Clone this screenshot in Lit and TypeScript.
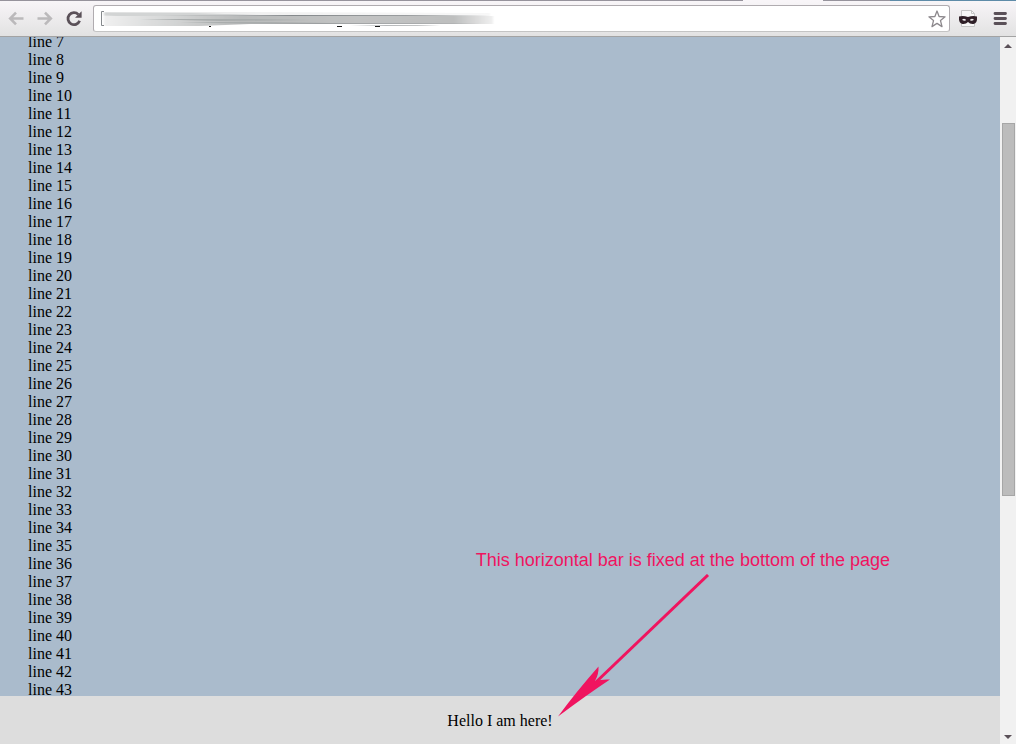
import { LitElement, html, css } from "lit";
import { customElement } from "lit/decorators.js";

@customElement("browser-toolbar")
class BrowserToolbar extends LitElement {
  static styles = css`
    :host {
      display: flex;
      align-items: center;
      box-sizing: border-box;
      height: 37px;
      padding: 0 2px;
      border-top: 1px solid #96939c;
      border-bottom: 1px solid #a3a3a3;
      background: linear-gradient(#f8f5f8, #e2e2e2);
      position: relative;
    }
    .tabs {
      position: absolute;
      top: -1px;
      left: 0;
      right: 0;
      height: 1px;
      display: flex;
      justify-content: flex-end;
    }
    .active { width: 80px; background: #f8f5f8; }
    .inactive { width: 67px; background: #96939c; }
    .frame { width: 126px; background: #5e8ba8; }
    .group { display: flex; flex: none; gap: 1px; }
    .tools { gap: 4px; }
    button {
      display: grid;
      place-items: center;
      flex: none;
      width: 28px;
      height: 28px;
      padding: 0;
      border: 0;
      background: none;
    }
    svg { display: block; }
    .address {
      flex: 1;
      display: flex;
      align-items: center;
      box-sizing: border-box;
      height: 27px;
      margin: 0 4px 0 5px;
      border: 1px solid #b0acb0;
      border-bottom-color: #c4c4c4;
      border-radius: 3px;
      background: #fff;
      position: relative;
    }
    .smudge {
      position: absolute;
      left: 6px;
      top: 5px;
      pointer-events: none;
    }
    input {
      flex: 1;
      min-width: 0;
      height: 24px;
      padding: 0 8px;
      border: 0;
      outline: 0;
      background: none;
      font: 14px "Liberation Sans", Arial, sans-serif;
    }
    .star { width: 25px; height: 24px; }
  `;

  render() {
    return html`
      <div class="tabs"><div class="active"></div><div class="inactive"></div><div class="frame"></div></div>
      <div class="group">
        <button aria-label="Back">
          <svg width="16" height="16" viewBox="0 0 16 16" fill="none" stroke="#bbb9bb" stroke-width="2.600">
            <path d="M15.500 7.500H2.500M8 1.700 2.200 7.500 8 13.300" />
          </svg>
        </button>
        <button aria-label="Forward">
          <svg width="16" height="16" viewBox="0 0 16 16" fill="none" stroke="#bbb9bb" stroke-width="2.600">
            <path d="M.5 7.500h13M8 1.700 13.800 7.500 8 13.300" />
          </svg>
        </button>
        <button aria-label="Reload">
          <svg width="16" height="16" viewBox="0 0 16 16">
            <path d="M12.400 3.600A6 6 0 1 0 13.600 9.800" fill="none" stroke="#5a5058" stroke-width="2.800" />
            <path d="M15.600.3V6.800H9z" fill="#5a5058" />
          </svg>
        </button>
      </div>
      <div class="address">
        <input type="text" aria-label="Address" />
        <svg class="smudge" width="395" height="18" viewBox="0 0 395 18">
          <defs>
            <linearGradient id="band">
              <stop offset="0" stop-color="#f0f0f0" />
              <stop offset=".12" stop-color="#dcdddd" />
              <stop offset=".35" stop-color="#b9bbbb" />
              <stop offset=".65" stop-color="#c2c3c3" />
              <stop offset=".9" stop-color="#bebfbf" />
              <stop offset="1" stop-color="#f0f0f0" />
            </linearGradient>
            <linearGradient id="streak">
              <stop offset="0" stop-color="#85898c" stop-opacity="0" />
              <stop offset=".4" stop-color="#85898c" />
              <stop offset=".75" stop-color="#9a9d9f" />
              <stop offset="1" stop-color="#85898c" stop-opacity="0" />
            </linearGradient>
            <linearGradient id="haze">
              <stop offset="0" stop-color="#dfe0e0" />
              <stop offset=".4" stop-color="#f1f1f1" />
              <stop offset="1" stop-color="#f8f8f8" />
            </linearGradient>
            <filter id="soft" x="-5%" y="-30%" width="110%" height="160%">
              <feGaussianBlur stdDeviation="1 .6" />
            </filter>
          </defs>
          <g filter="url(#soft)">
            <path d="M4 1h140l246 1v5H4z" fill="url(#haze)" />
            <path d="M4 2h120L60 4H4zM30 3h130l-60 2H4z" fill="#d2d4d4" />
            <path d="M4 5h389v8H150l-50 2H4z" fill="url(#band)" />
            <path d="M40 8h110l60 1-90 1zM80 11h90l60 1H120z" fill="#a9adad" />
          </g>
          <rect x="60" y="4" width="330" height="1" fill="url(#streak)" />
          <rect x="110" y="12" width="270" height="1" fill="url(#streak)" opacity=".6" />
          <rect x="250" y="14" width="90" height="1" fill="url(#streak)" opacity=".6" />
          <path d="M4 .5H1.500V14.500H4" fill="none" stroke="#85898c" />
          <path d="M109 15.500h2M237 15.500h5M275 15.500h5" stroke="#1a1a1a" />
        </svg>
        <button class="star" aria-label="Bookmark this page">
          <svg width="18" height="18" viewBox="0 0 18 18">
            <path d="M9 1l2.100 5.500 6 .3-4.600 3.800 1.500 6L9 13.400 4 16.600l1.500-6L.9 6.800l6-.3z"
              fill="#fff" stroke="#8d898d" stroke-width="1.300" stroke-linejoin="round" />
          </svg>
        </button>
      </div>
      <div class="group tools">
        <button aria-label="Mask extension">
          <svg width="20" height="20" viewBox="0 0 20 20">
            <path d="M3.500 1.500h10l3 3v13h-13z" fill="#f8f8f8" stroke="#c6c6c6" />
            <path d="M13.500 1.500v3h3" fill="none" stroke="#c6c6c6" />
            <path d="M1 7.500q4-1.200 9 .4 5-1.600 9-.4.500 7-3.500 7.500-3.500.4-5.500-2-2 2.400-5.500 2Q.500 14.500 1 7.500z" fill="#302028" />
            <path d="M4.500 10.700q1.500-1.300 3.300.3-1.600 1-3.300-.3zM12.200 11q1.800-1.600 3.300-.3-1.700 1.300-3.300.3z" fill="#fff" stroke="#fff" stroke-width=".5" />
          </svg>
        </button>
        <button aria-label="Menu">
          <svg width="14" height="14" viewBox="0 0 14 14" stroke="#5a5058" stroke-width="2.800" stroke-linecap="round">
            <path d="M2 1.500h10.500M2 6.500h10.500M2 11.500h10.500" />
          </svg>
        </button>
      </div>
    `;
  }
}

@customElement("page-scrollbar")
class PageScrollbar extends LitElement {
  static styles = css`
    :host {
      display: grid;
      grid-template-rows: 17px 1fr 15px;
      flex: none;
      width: 16px;
      background: #f1f1f1;
    }
    .arrow {
      display: grid;
      place-items: center;
      padding: 0;
      border: 0;
      background: none;
    }
    svg { display: block; }
    .track {
      display: grid;
      grid-template-rows: 69fr 373fr 233fr;
      padding: 0 1px 0 2px;
    }
    .thumb {
      grid-row: 2;
      border: 1px solid #a6a6a6;
      background: #bcbcbc;
    }
  `;

  render() {
    return html`
      <button class="arrow" aria-label="Scroll up">
        <svg width="8" height="4" viewBox="0 0 8 4"><path d="M0 4 4 0l4 4z" fill="#5a5058" /></svg>
      </button>
      <div class="track"><div class="thumb"></div></div>
      <button class="arrow" aria-label="Scroll down">
        <svg width="8" height="4" viewBox="0 0 8 4"><path d="M0 0 4 4l4-4z" fill="#5a5058" /></svg>
      </button>
    `;
  }
}

@customElement("app-root")
class AppRoot extends LitElement {
  static styles = css`
    :host {
      display: flex;
      flex-direction: column;
      height: 100vh;
      overflow: hidden;
      color: #000;
      font: 16px/18px "Liberation Serif", "Times New Roman", serif;
    }
    browser-toolbar { flex: none; }
    .viewport {
      flex: 1;
      display: flex;
      min-height: 0;
    }
    .page {
      flex: 1;
      display: flex;
      flex-direction: column;
      min-width: 0;
      position: relative;
      background: #aabbcc;
    }
    .lines {
      flex: 1;
      min-height: 0;
      overflow: hidden;
      padding-left: 28px;
    }
    .scrolled { margin-top: -4px; }
    .bar {
      flex: none;
      padding: 16px 0 14px;
      background: #dddddd;
      text-align: center;
    }
    .note {
      position: absolute;
      right: 110px;
      bottom: 24px;
      color: #f0145f;
      font: 18px/20px "Liberation Sans", Arial, sans-serif;
      white-space: nowrap;
    }
    .note svg {
      display: block;
      margin: 4px 0 0 80px;
    }
  `;

  private lines = Array.from({ length: 37 }, (_, i) => i + 7);

  render() {
    return html`
      <browser-toolbar></browser-toolbar>
      <div class="viewport">
        <main class="page">
          <div class="lines">
            <div class="scrolled">${this.lines.map((n) => html`<div>line ${n}</div>`)}</div>
          </div>
          <footer class="bar">Hello I am here!</footer>
          <div class="note">
            This horizontal bar is fixed at the bottom of the page
            <svg width="154" height="146" viewBox="0 0 154 146">
              <path d="M152 1 38 110" stroke="#f0145f" stroke-width="3" />
              <path d="M2 142.500Q20 118 42.500 92.500 43 100 39 107 46 105 54 105.500 32 120 2 142.500z" fill="#f0145f" />
            </svg>
          </div>
        </main>
        <page-scrollbar></page-scrollbar>
      </div>
    `;
  }
}
